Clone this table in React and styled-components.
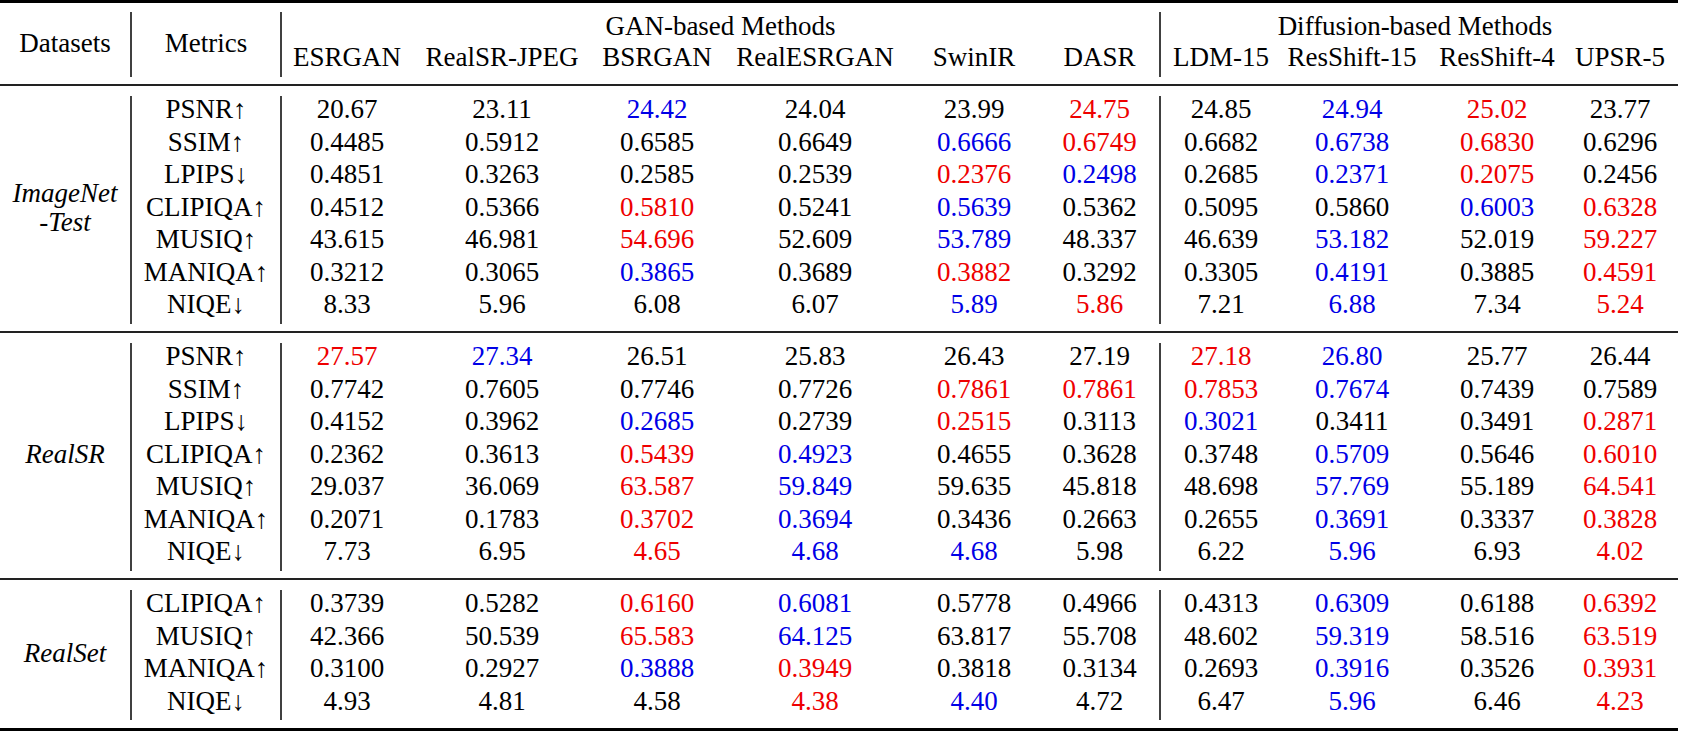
import React from "react";
import styled, { createGlobalStyle } from "styled-components";

const COLS =
  "132px 150px 130px 180px 130px 186px 132px 121px 120px 142px 148px 98px";

const SERIF = `"Liberation Serif", "Tinos", "Times New Roman", Times, "DejaVu Serif", serif`;

const Global = createGlobalStyle`
  html, body { margin: 0; padding: 0; background: #fff; }
  body {
    font-family: ${SERIF};
    color: #000;
  }
  * { box-sizing: border-box; }
`;

const Table = styled.div`
  width: 1678px;
  border-top: 3px solid #000;
  border-bottom: 3px solid #000;
  font-family: ${SERIF};
  font-size: 27px;
  white-space: nowrap;
`;

const Header = styled.div`
  display: grid;
  grid-template-columns: ${COLS};
  grid-template-rows: 32px 33px;
  padding: 9px 0 7px;
  border-bottom: 2px solid #222;
`;

const line = "2px solid #404040";

const HeadSpan = styled.div`
  grid-row: 1 / 3;
  grid-column: ${(p) => p.$col};
  display: flex;
  align-items: center;
  justify-content: center;
  line-height: 27px;
  padding-bottom: 3px;
  border-right: ${line};
`;

const GroupTitle = styled.div`
  grid-row: 1;
  grid-column: ${(p) => p.$cols};
  text-align: center;
  line-height: 27px;
  padding-top: 1px;
  border-right: ${(p) => (p.$divider ? line : "none")};
`;

const MethodName = styled.div`
  grid-row: 2;
  grid-column: ${(p) => p.$col};
  text-align: center;
  line-height: 27px;
  border-right: ${(p) => (p.$divider ? line : "none")};
`;

const Section = styled.div`
  display: grid;
  grid-template-columns: ${COLS};
  grid-auto-rows: 32.5px;
  padding: 10px 0 7.5px;
  &:not(:last-child) {
    border-bottom: 2px solid #222;
  }
`;

const DatasetCell = styled.div`
  grid-column: 1;
  grid-row: 1 / span ${(p) => p.$rows};
  display: flex;
  flex-direction: column;
  align-items: center;
  justify-content: center;
  font-style: italic;
  line-height: 29px;
  padding-bottom: 4px;
  border-right: ${line};
`;

const MetricCell = styled.div`
  text-align: center;
  line-height: 27px;
  border-right: ${line};
`;

const toneColor = { r: "#ee0000", b: "#0000e6", k: "#000" };

const ValueCell = styled.div`
  text-align: center;
  line-height: 27px;
  color: ${(p) => toneColor[p.$tone]};
  border-right: ${(p) => (p.$divider ? line : "none")};
`;

const GAN = ["ESRGAN", "RealSR-JPEG", "BSRGAN", "RealESRGAN", "SwinIR", "DASR"];
const DIFF = ["LDM-15", "ResShift-15", "ResShift-4", "UPSR-5"];

const DATA = [
  {
    name: ["ImageNet", "-Test"],
    rows: [
      ["PSNR↑", "20.67 23.11 b24.42 24.04 23.99 r24.75 24.85 b24.94 r25.02 23.77"],
      ["SSIM↑", "0.4485 0.5912 0.6585 0.6649 b0.6666 r0.6749 0.6682 b0.6738 r0.6830 0.6296"],
      ["LPIPS↓", "0.4851 0.3263 0.2585 0.2539 r0.2376 b0.2498 0.2685 b0.2371 r0.2075 0.2456"],
      ["CLIPIQA↑", "0.4512 0.5366 r0.5810 0.5241 b0.5639 0.5362 0.5095 0.5860 b0.6003 r0.6328"],
      ["MUSIQ↑", "43.615 46.981 r54.696 52.609 b53.789 48.337 46.639 b53.182 52.019 r59.227"],
      ["MANIQA↑", "0.3212 0.3065 b0.3865 0.3689 r0.3882 0.3292 0.3305 b0.4191 0.3885 r0.4591"],
      ["NIQE↓", "8.33 5.96 6.08 6.07 b5.89 r5.86 7.21 b6.88 7.34 r5.24"],
    ],
  },
  {
    name: ["RealSR"],
    rows: [
      ["PSNR↑", "r27.57 b27.34 26.51 25.83 26.43 27.19 r27.18 b26.80 25.77 26.44"],
      ["SSIM↑", "0.7742 0.7605 0.7746 0.7726 r0.7861 r0.7861 r0.7853 b0.7674 0.7439 0.7589"],
      ["LPIPS↓", "0.4152 0.3962 b0.2685 0.2739 r0.2515 0.3113 b0.3021 0.3411 0.3491 r0.2871"],
      ["CLIPIQA↑", "0.2362 0.3613 r0.5439 b0.4923 0.4655 0.3628 0.3748 b0.5709 0.5646 r0.6010"],
      ["MUSIQ↑", "29.037 36.069 r63.587 b59.849 59.635 45.818 48.698 b57.769 55.189 r64.541"],
      ["MANIQA↑", "0.2071 0.1783 r0.3702 b0.3694 0.3436 0.2663 0.2655 b0.3691 0.3337 r0.3828"],
      ["NIQE↓", "7.73 6.95 r4.65 b4.68 b4.68 5.98 6.22 b5.96 6.93 r4.02"],
    ],
  },
  {
    name: ["RealSet"],
    rows: [
      ["CLIPIQA↑", "0.3739 0.5282 r0.6160 b0.6081 0.5778 0.4966 0.4313 b0.6309 0.6188 r0.6392"],
      ["MUSIQ↑", "42.366 50.539 r65.583 b64.125 63.817 55.708 48.602 b59.319 58.516 r63.519"],
      ["MANIQA↑", "0.3100 0.2927 b0.3888 r0.3949 0.3818 0.3134 0.2693 b0.3916 0.3526 r0.3931"],
      ["NIQE↓", "4.93 4.81 4.58 r4.38 b4.40 4.72 6.47 b5.96 6.46 r4.23"],
    ],
  },
];

function parseValues(str) {
  return str.split(" ").map((tok) => {
    const c = tok[0];
    if (c === "r" || c === "b") return { tone: c, text: tok.slice(1) };
    return { tone: "k", text: tok };
  });
}

export default function App() {
  return (
    <>
      <Global />
      <Table>
        <Header>
          <HeadSpan $col={1}>Datasets</HeadSpan>
          <HeadSpan $col={2}>Metrics</HeadSpan>
          <GroupTitle $cols="3 / 9" $divider>
            GAN-based Methods
          </GroupTitle>
          <GroupTitle $cols="9 / 13">Diffusion-based Methods</GroupTitle>
          {GAN.map((m, i) => (
            <MethodName key={m} $col={i + 3} $divider={i === 5}>
              {m}
            </MethodName>
          ))}
          {DIFF.map((m, i) => (
            <MethodName key={m} $col={i + 9}>
              {m}
            </MethodName>
          ))}
        </Header>
        {DATA.map((sec) => (
          <Section key={sec.name.join("")}>
            <DatasetCell $rows={sec.rows.length}>
              {sec.name.map((n) => (
                <span key={n}>{n}</span>
              ))}
            </DatasetCell>
            {sec.rows.map(([metric, vals]) => (
              <React.Fragment key={metric}>
                <MetricCell>{metric}</MetricCell>
                {parseValues(vals).map((v, i) => (
                  <ValueCell key={i} $tone={v.tone} $divider={i === 5}>
                    {v.text}
                  </ValueCell>
                ))}
              </React.Fragment>
            ))}
          </Section>
        ))}
      </Table>
    </>
  );
}
